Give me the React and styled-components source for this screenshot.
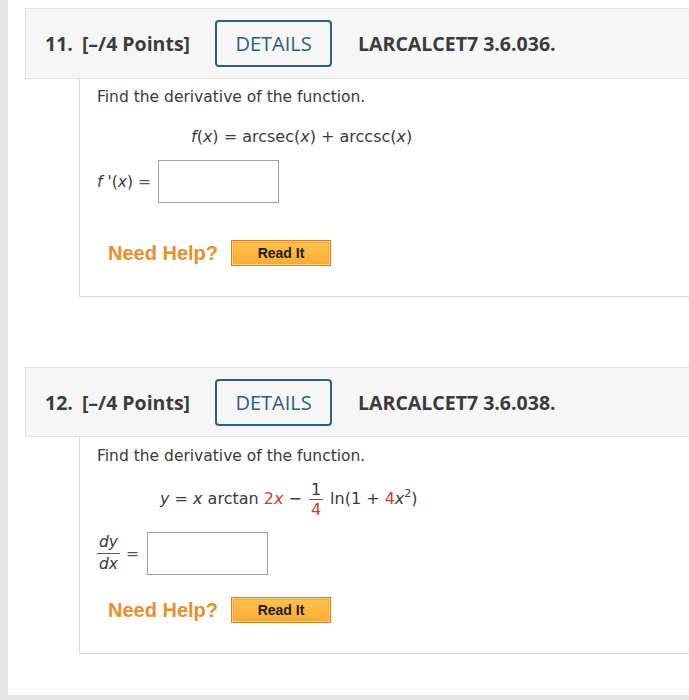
import React from "react";
import styled, { createGlobalStyle } from "styled-components";

const GlobalStyle = createGlobalStyle`
  html, body {
    margin: 0;
    padding: 0;
    background: #e7e7ea;
  }
  #root {
    overflow: hidden;
  }
`;

export const Page = styled.div`
  background: #ffffff;
  margin: 0 0 5px 8px;
  padding: 8px 0 43px 17px;
  height: 644px;
  overflow: hidden;
`;

export const Question = styled.section`
  margin-bottom: ${(p) => p.$after || 0}px;
`;

export const Header = styled.div`
  display: flex;
  align-items: center;
  box-sizing: border-box;
  height: ${(p) => p.$h || 71}px;
  margin-right: -4px;
  padding-left: 19px;
  background: #f6f6f6;
  border: 1px solid #e1e1e1;
  font-family: "Open Sans", "Liberation Sans", sans-serif;
  font-size: 19.5px;
  color: #3b3b3b;
`;

export const Num = styled.span`
  font-weight: 700;
  margin-right: 9px;
`;

export const Points = styled.span`
  font-weight: 700;
`;

export const DetailsButton = styled.button`
  box-sizing: border-box;
  width: 117px;
  height: 47px;
  margin: 0 26px 0 25px;
  background: transparent;
  border: 2px solid #2d5f81;
  border-radius: 4px;
  font-family: "Open Sans", "Liberation Sans", sans-serif;
  font-size: 20px;
  color: #2d5f81;
  padding: 0;
`;

export const Code = styled.span`
  font-weight: 700;
`;

export const Body = styled.div`
  margin-left: 54px;
  border-left: 1px solid #dcdcdc;
  border-bottom: 1px solid #dcdcdc;
  padding: ${(p) => p.$top || 8}px 0 30px 17px;
  font-family: "DejaVu Sans", Verdana, sans-serif;
  font-size: 15.5px;
  color: #3a3a3a;
`;

export const Prompt = styled.div`
  line-height: 20px;
`;

export const Formula = styled.div`
  margin: ${(p) => p.$mt}px 0 0 ${(p) => p.$indent}px;
  font-size: 16px;
  line-height: 20px;
  white-space: pre;
`;

export const Var = styled.i`
  font-style: italic;
`;

export const Red = styled.span`
  color: #d03a32;
`;

export const Frac = styled.span`
  display: inline-flex;
  flex-direction: column;
  align-items: center;
  vertical-align: middle;
  margin: 0 ${(p) => p.$mx ?? 7}px;
  line-height: ${(p) => p.$lh || 17}px;
`;

export const Numer = styled.span`
  padding: 0 2px 1px;
  border-bottom: 1px solid #555;
`;

export const Denom = styled.span`
  padding: 1px 2px 0;
`;

export const Sup = styled.sup`
  font-size: 11px;
  line-height: 0;
  vertical-align: 7px;
`;

export const AnswerRow = styled.div`
  display: flex;
  align-items: center;
  margin-top: ${(p) => p.$mt}px;
`;

export const Eq = styled.span`
  margin: 0 ${(p) => p.$mr}px 0 ${(p) => p.$ml}px;
  color: #555;
`;

export const AnswerBox = styled.div`
  box-sizing: border-box;
  width: 121px;
  height: 43px;
  border: 1px solid #9f9f9f;
  background: #fff;
`;

export const HelpRow = styled.div`
  display: flex;
  align-items: center;
  margin: ${(p) => p.$mt}px 0 0 11px;
`;

export const NeedHelp = styled.span`
  font-family: "Liberation Sans", Arial, sans-serif;
  font-weight: 700;
  font-size: 20px;
  color: #e88f2a;
  margin-right: 13px;
`;

export const ReadIt = styled.button`
  box-sizing: border-box;
  width: 100px;
  height: 26px;
  padding: 0;
  border: 1px solid #d9801c;
  box-shadow: inset 0 0 0 1px #fcd27c, inset 0 0 0 2px #f6a93a;
  background: linear-gradient(#ffc24e, #fbac33);
  font-family: "Liberation Sans", Arial, sans-serif;
  font-weight: 700;
  font-size: 14px;
  color: #1d1d1d;
`;

function QuestionHeader({ num, code, h }) {
  return (
    <Header $h={h}>
      <Num>{num}.</Num>
      <Points>[–/4 Points]</Points>
      <DetailsButton>DETAILS</DetailsButton>
      <Code>{code}</Code>
    </Header>
  );
}

function Help({ mt }) {
  return (
    <HelpRow $mt={mt}>
      <NeedHelp>Need Help?</NeedHelp>
      <ReadIt>Read It</ReadIt>
    </HelpRow>
  );
}

export default function App() {
  return (
    <>
      <GlobalStyle />
      <Page>
        <Question $after={70}>
          <QuestionHeader num="11" code="LARCALCET7 3.6.036." />
          <Body>
            <Prompt>Find the derivative of the function.</Prompt>
            <Formula $mt={20} $indent={94}>
              <Var>f</Var>(<Var>x</Var>) = arcsec(<Var>x</Var>) + arccsc(<Var>x</Var>)
            </Formula>
            <AnswerRow $mt={13}>
              <span>
                <Var>f '</Var>(<Var>x</Var>)
              </span>
              <Eq $ml={5} $mr={7}>=</Eq>
              <AnswerBox />
            </AnswerRow>
            <Help mt={37} />
          </Body>
        </Question>

        <Question>
          <QuestionHeader num="12" code="LARCALCET7 3.6.038." h={70} />
          <Body $top={9}>
            <Prompt>Find the derivative of the function.</Prompt>
            <Formula $mt={15} $indent={63}>
              <Var>y</Var> = <Var>x</Var> arctan <Red>2<Var>x</Var></Red> −
              <Frac>
                <Numer>1</Numer>
                <Denom>
                  <Red>4</Red>
                </Denom>
              </Frac>
              ln(1 + <Red>4</Red><Var>x</Var><Sup>2</Sup>)
            </Formula>
            <AnswerRow $mt={14}>
              <Frac $mx={0} $lh={19}>
                <Numer>
                  <Var>dy</Var>
                </Numer>
                <Denom>
                  <Var>dx</Var>
                </Denom>
              </Frac>
              <Eq $ml={6} $mr={8}>=</Eq>
              <AnswerBox />
            </AnswerRow>
            <Help mt={22} />
          </Body>
        </Question>
      </Page>
    </>
  );
}
